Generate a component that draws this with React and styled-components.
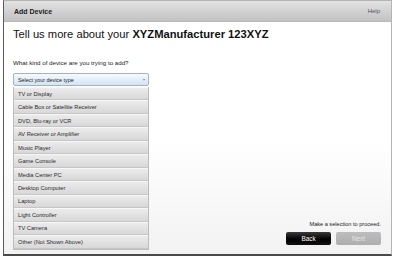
import React from "react";
import styled, { createGlobalStyle } from "styled-components";

const GlobalStyle = createGlobalStyle`
  html, body {
    margin: 0;
    padding: 0;
    background: #ffffff;
  }
  body {
    font-family: "Liberation Sans", Arial, sans-serif;
  }
`;

const Page = styled.div`
  width: 395px;
  height: 259px;
  padding: 0 3px 0 3px;
  box-sizing: border-box;
`;

const Dialog = styled.div`
  width: 389px;
  height: 256px;
  box-sizing: border-box;
  border: 1px solid #b4b4b4;
  border-left: 1px solid #5a5a5a;
  border-bottom: 2px solid #4a4a4a;
  display: flex;
  flex-direction: column;
  background: linear-gradient(#ffffff 0%, #ffffff 55%, #f2f2f2 100%);
`;

const TitleBar = styled.div`
  height: 20px;
  flex: none;
  display: flex;
  align-items: center;
  justify-content: space-between;
  padding: 0 11px 0 10px;
  background: linear-gradient(#e2e2e2, #c2c2c2);
  border-bottom: 1px solid #b8b8b8;
`;

const TitleText = styled.span`
  font-size: 7px;
  font-weight: bold;
  color: #222;
`;

const HelpLink = styled.span`
  font-size: 6px;
  color: #555;
`;

const Body = styled.div`
  flex: 1;
  display: flex;
  padding: 0 10px 0 9px;
  min-height: 0;
`;

const LeftColumn = styled.div`
  width: 136px;
  display: flex;
  flex-direction: column;
`;

const Heading = styled.h1`
  margin: 6.5px 0 0 0;
  font-size: 11.2px;
  font-weight: normal;
  white-space: nowrap;
  color: #111;
  line-height: 11px;
  width: 300px;

  b {
    font-weight: bold;
  }
`;

const Question = styled.div`
  margin-top: 19.5px;
  font-size: 6.2px;
  line-height: 7px;
  color: #222;
  white-space: nowrap;
`;

const Select = styled.div`
  margin-top: 7px;
  height: 13px;
  flex: none;
  box-sizing: border-box;
  border: 1px solid #9fb4c6;
  border-radius: 2px;
  background: linear-gradient(#f6fafd, #d3e4f3);
  display: flex;
  align-items: center;
  justify-content: space-between;
  padding: 0 3px 0 4px;
  font-size: 5.4px;
  color: #222;
`;

const Arrow = styled.span`
  width: 0;
  height: 0;
  border-left: 1.5px solid transparent;
  border-right: 1.5px solid transparent;
  border-top: 2px solid #6d8aa3;
`;

const List = styled.div`
  margin-top: 1px;
  border: 1px solid #bcbcbc;
  border-top: none;
  display: flex;
  flex-direction: column;
`;

const Item = styled.div`
  height: 13.48px;
  flex: none;
  box-sizing: border-box;
  display: flex;
  align-items: center;
  padding-left: 4px;
  font-size: 5.7px;
  color: #2a2a2a;
  background: linear-gradient(#ebebeb, #d8d8d8);
  border-top: 1px solid #f7f7f7;
  border-bottom: 1px solid #c6c6c6;
`;

const RightColumn = styled.div`
  flex: 1;
  display: flex;
  flex-direction: column;
  justify-content: flex-end;
  align-items: flex-end;
  padding-bottom: 9px;
`;

const Hint = styled.div`
  font-size: 5.6px;
  color: #222;
  margin-bottom: 5px;
`;

const Buttons = styled.div`
  display: flex;
  gap: 5px;
`;

const Button = styled.div`
  width: 45px;
  height: 13px;
  border-radius: 2px;
  display: flex;
  align-items: center;
  justify-content: center;
  font-size: 6.4px;
  color: ${(p) => (p.$primary ? "#ffffff" : "#e6e6e6")};
  background: ${(p) =>
    p.$primary
      ? "linear-gradient(#3a3a3a, #000000 55%, #111111)"
      : "linear-gradient(#bdbdbd, #aeaeae)"};
`;

const devices = [
  "TV or Display",
  "Cable Box or Satellite Receiver",
  "DVD, Blu-ray or VCR",
  "AV Receiver or Amplifier",
  "Music Player",
  "Game Console",
  "Media Center PC",
  "Desktop Computer",
  "Laptop",
  "Light Controller",
  "TV Camera",
  "Other (Not Shown Above)",
];

export default function App() {
  return (
    <Page>
      <GlobalStyle />
      <Dialog>
        <TitleBar>
          <TitleText>Add Device</TitleText>
          <HelpLink>Help</HelpLink>
        </TitleBar>
        <Body>
          <LeftColumn>
            <Heading>
              Tell us more about your <b>XYZManufacturer 123XYZ</b>
            </Heading>
            <Question>What kind of device are you trying to add?</Question>
            <Select>
              <span>Select your device type</span>
              <Arrow />
            </Select>
            <List>
              {devices.map((d) => (
                <Item key={d}>{d}</Item>
              ))}
            </List>
          </LeftColumn>
          <RightColumn>
            <Hint>Make a selection to proceed.</Hint>
            <Buttons>
              <Button $primary>Back</Button>
              <Button>Next</Button>
            </Buttons>
          </RightColumn>
        </Body>
      </Dialog>
    </Page>
  );
}
